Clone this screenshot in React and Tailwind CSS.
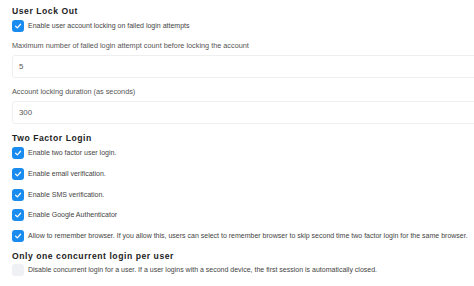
import React from "react";

const Check = ({ checked }) => (
  <span
    className={`flex h-[12px] w-[12px] shrink-0 items-center justify-center rounded-[3px] ${
      checked ? "bg-[#1a8cf0]" : "bg-[#eef0f3]"
    }`}
  >
    {checked && (
      <svg width="8" height="8" viewBox="0 0 10 10" fill="none">
        <path d="M2 5.3 L4.2 7.4 L8.2 2.8" stroke="white" strokeWidth="1.5" strokeLinecap="round" strokeLinejoin="round" />
      </svg>
    )}
  </span>
);

const CheckRow = ({ checked = true, children }) => (
  <label className="flex h-[14px] items-center gap-[4px]">
    <Check checked={checked} />
    <span className="text-[7px] leading-[14px] text-[#444] whitespace-nowrap">{children}</span>
  </label>
);

const Heading = ({ children, className = "" }) => (
  <h3 className={`h-[12px] text-[8.6px] font-bold leading-[12px] tracking-[0.55px] text-[#222] ${className}`}>{children}</h3>
);

const Field = ({ label, value, className = "" }) => (
  <div className={className}>
    <div className="h-[12px] text-[7.3px] leading-[12px] text-[#555]">{label}</div>
    <div className="mt-[3px] flex h-[23px] w-[470px] items-center rounded-[3px] border border-[#efefef] px-[6px] text-[7.8px] text-[#555]">
      {value}
    </div>
  </div>
);

export default function App() {
  return (
    <div
      className="h-[286px] w-[474px] overflow-hidden bg-white pl-[12px] pt-[5px]"
      style={{ fontFamily: '"Liberation Sans", Arial, sans-serif' }}
    >
      <Heading>User Lock Out</Heading>
      <div className="mt-[2px]">
        <CheckRow>Enable user account locking on failed login attempts</CheckRow>
      </div>
      <Field className="mt-[7px]" label="Maximum number of failed login attempt count before locking the account" value="5" />
      <Field className="mt-[8px]" label="Account locking duration (as seconds)" value="300" />

      <Heading className="mt-[8px]">Two Factor Login</Heading>
      <div className="mt-[2px] flex flex-col gap-[6.75px]">
        <CheckRow>Enable two factor user login.</CheckRow>
        <CheckRow>Enable email verification.</CheckRow>
        <CheckRow>Enable SMS verification.</CheckRow>
        <CheckRow>Enable Google Authenticator</CheckRow>
        <CheckRow>
          Allow to remember browser. If you allow this, users can select to remember browser to skip second time two factor login for the same browser.
        </CheckRow>
      </div>

      <Heading className="mt-[7px]">Only one concurrent login per user</Heading>
      <div className="mt-[1px]">
        <CheckRow checked={false}>
          Disable concurrent login for a user. If a user logins with a second device, the first session is automatically closed.
        </CheckRow>
      </div>
    </div>
  );
}
